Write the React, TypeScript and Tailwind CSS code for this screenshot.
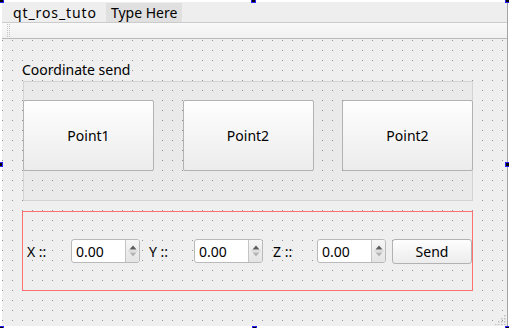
import React from "react";

const font = "font-['Noto_Sans','DejaVu_Sans',sans-serif]";

function Handle({ className }: { className: string }) {
  return <div className={`absolute w-[5px] h-[5px] bg-black border border-[#2020ff] ${className}`} />;
}

function SpinBox({ width }: { width: string }) {
  return (
    <div className={`flex h-[24px] ${width} rounded-[3px] border border-[#b9b9b9] bg-white overflow-hidden`}>
      <div className="flex-1 flex items-center pl-[4px] text-[14px] text-black">0.00</div>
      <div className="w-[14px] border-l border-[#c4c4c4] bg-gradient-to-b from-[#f6f6f6] to-[#e4e4e4]">
        <svg width="14" height="22" viewBox="0 0 14 22">
          <path d="M3.5 9.5 L7 5.5 L10.5 9.5 Z" fill="#5c5c5c" />
          <line x1="2" y1="11" x2="12" y2="11" stroke="#d0d0d0" strokeWidth="1" />
          <path d="M3.5 12.5 L7 16.5 L10.5 12.5 Z" fill="#b4b4b4" />
        </svg>
      </div>
    </div>
  );
}

export default function App() {
  return (
    <div className={`relative w-[509px] h-[328px] bg-white overflow-hidden ${font}`}>
      <div className="absolute left-[2px] top-[2px] w-[506px] h-[324px] flex flex-col border-r border-[#a4a4a4] bg-[#efefef]">
        {/* Menu bar */}
        <div className="h-[21px] flex items-center bg-[#eeeeee] border-b border-[#cbcbcb] text-[14px] text-black">
          <span className="ml-[11px] tracking-[0.9px]">qt_ros_tuto</span>
          <span className="ml-[9px] h-[19px] flex items-center px-[5px] bg-[#e0e0e0]">Type Here</span>
        </div>

        {/* Tool bar */}
        <div className="h-[16px] flex items-center bg-gradient-to-b from-[#f9f9f9] to-[#f1f1f1] border-b border-[#b9b9b9]">
          <svg className="ml-[5px]" width="4" height="14" viewBox="0 0 4 14">
            {[0, 2, 4, 6, 8, 10, 12].map((y) => (
              <g key={y}>
                <rect x="0" y={y} width="1" height="1" fill="#c4c4c4" />
                <rect x="2" y={y} width="1" height="1" fill="#c4c4c4" />
              </g>
            ))}
          </svg>
        </div>

        {/* Form with designer grid */}
        <div className="relative flex-1 flex flex-col bg-[linear-gradient(to_right,transparent_1px,#efefef_1px),linear-gradient(to_bottom,#949494_1px,#efefef_1px)] bg-[size:10px_10px] bg-[position:0_1px]">
          <div className="mt-[20px] ml-[20px] h-[21px] flex items-center text-[14px] text-black">Coordinate send</div>

          <div className="mt-[1px] ml-[21px] w-[450px] h-[120px] border border-[#d3d3d3] bg-[#00000005]">
            <div className="-mx-px mt-[18px] flex justify-between">
              {["Point1", "Point2", "Point2"].map((label, i) => (
                <button
                  key={i}
                  className="w-[131px] h-[71px] rounded-[2px] border border-[#b2b2b2] bg-gradient-to-b from-[#fefefe] to-[#ececec] text-[14px] text-black"
                >
                  {label}
                </button>
              ))}
            </div>
          </div>

          <div className="mt-[10px] ml-[20px] w-[451px] h-[80px] border border-[#ff7070] flex items-center text-[14px] text-black">
            <span className="ml-[4px] w-[44px]">X ::</span>
            <SpinBox width="w-[69px]" />
            <span className="ml-[9px] w-[45px]">Y ::</span>
            <SpinBox width="w-[69px]" />
            <span className="ml-[10px] w-[44px]">Z ::</span>
            <SpinBox width="w-[69px]" />
            <button className="ml-[6px] w-[80px] h-[25px] rounded-[3px] border border-[#b2b2b2] bg-gradient-to-b from-[#fefefe] to-[#ececec] text-[14px] text-black">
              Send
            </button>
          </div>

          {/* size grip */}
          <svg className="absolute right-[1px] bottom-[1px]" width="11" height="11" viewBox="0 0 11 11">
            {[
              [9, 1], [9, 4], [6, 4], [9, 7], [6, 7], [3, 7], [9, 10], [6, 10], [3, 10], [0, 10],
            ].map(([x, y], i) => (
              <rect key={i} x={x} y={y} width="1.5" height="1.5" fill="#c0c0c0" />
            ))}
          </svg>
        </div>
      </div>

      <Handle className="left-[-1px] top-[-2px]" />
      <Handle className="left-[251px] top-[-2px]" />
      <Handle className="left-[505px] top-[-2px]" />
      <Handle className="left-[-2px] top-[162px]" />
      <Handle className="left-[505px] top-[162px]" />
      <Handle className="left-[-1px] top-[326px]" />
      <Handle className="left-[252px] top-[326px]" />
      <Handle className="left-[505px] top-[326px]" />
    </div>
  );
}
